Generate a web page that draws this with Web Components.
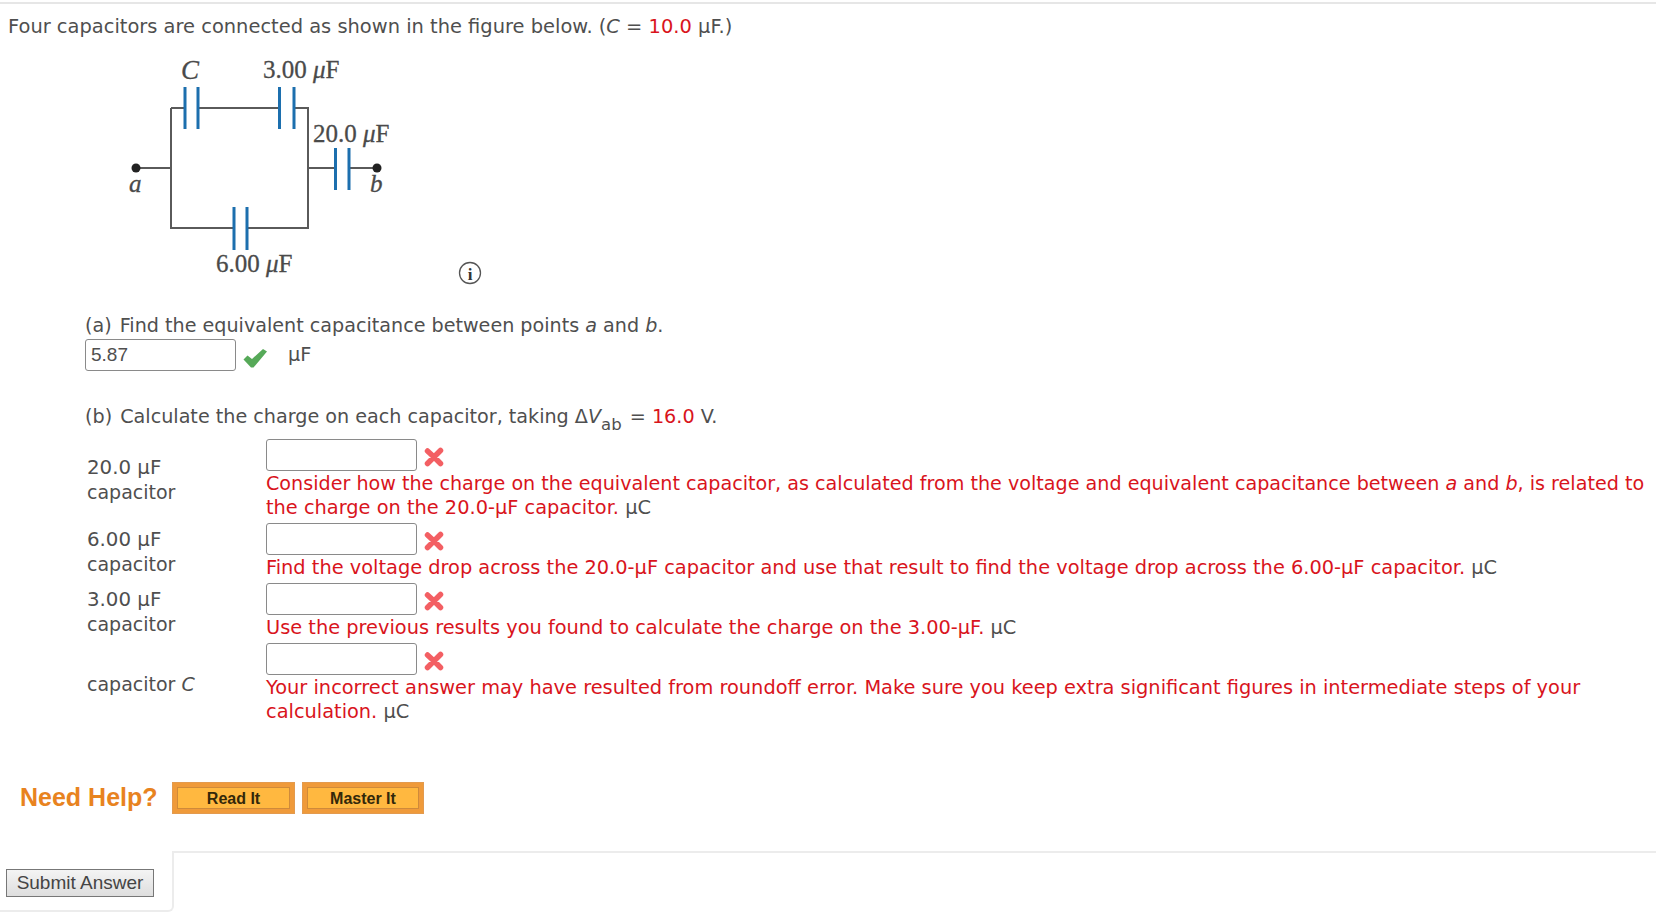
<!DOCTYPE html>
<html><head><meta charset="utf-8">
<style>
html,body{margin:0;padding:0;background:#fff}
body{font-family:"DejaVu Sans",sans-serif;font-size:19.3px;color:#4f4f4f;line-height:24px;width:1656px;height:924px;overflow:hidden}
</style></head><body>
<q-page>
  <q-intro>Four capacitors are connected as shown in the figure below. (<i>C</i> = <r-v>10.0</r-v> μF.)</q-intro>
  <q-circuit></q-circuit>
  <q-part-a></q-part-a>
  <q-part-b></q-part-b>
  <q-help></q-help>
  <q-footer></q-footer>
</q-page>
<script>
const def=(name,html)=>customElements.define(name,class extends HTMLElement{
  constructor(){super();this.attachShadow({mode:'open'}).innerHTML=html}
});
const check=`<svg width="24" height="20" viewBox="0 0 24 20" style="display:block"><path d="M0.500 11.500 L4.500 7.500 L9 11 L20 1 L24 3.500 L10.500 19.500 L8 19.500 Z" fill="#56a958"/></svg>`;
const cross=`<svg width="20" height="20" viewBox="0 0 20 20" style="display:block"><path d="M3.500 4 L10 10 M16.500 3.500 L10 10 M3.500 16.500 L10 10 M16.500 16.500 L10 10" stroke="#f35f63" stroke-width="5.500" stroke-linecap="round"/></svg>`;
def('r-v',`<style>:host{color:#d9141c}</style><slot></slot>`);
def('q-page',`<style>:host{display:block;margin-top:2px;border-top:2px solid #e6e6e6}</style><slot></slot>`);
def('q-intro',`<style>:host{display:block;padding:11px 0 0 8px;height:24px;font-size:19.45px}</style><slot></slot>`);
const cap=(x1,x2,y1,y2)=>`<path d="M${x1} ${y1}V${y2}M${x2} ${y1}V${y2}" stroke="#1c6fae" stroke-width="3" fill="none"/>`;
def('q-circuit',`<style>:host{display:block;height:274px;margin-top:-1px}svg{display:block}
text{font-family:"Liberation Serif",serif;font-size:25px;fill:#4a4a4a;stroke:#4a4a4a;stroke-width:.3px;font-weight:400}</style>
<svg width="520" height="252" viewBox="0 38 520 252">
<path d="M171 108H185M198 108H279M294 108H308V228H247M234 228H171V108M136 168H171M308 168H335M349 168H377" stroke="#5a5a5a" stroke-width="2" fill="none"/>
${cap(185,198,87,129)}${cap(279.500,294,87,129)}${cap(335.500,349,148,190)}${cap(234,247,207,250)}
<circle cx="136" cy="168" r="4.500" fill="#222"/><circle cx="377" cy="168" r="4.500" fill="#222"/>
<text x="181" y="79" style="font-style:italic;font-size:27px">C</text>
<text x="263" y="78">3.00 <tspan style="font-style:italic">μ</tspan>F</text>
<text x="313" y="142">20.0 <tspan style="font-style:italic">μ</tspan>F</text>
<text x="216" y="272">6.00 <tspan style="font-style:italic">μ</tspan>F</text>
<text x="129" y="192" style="font-style:italic">a</text>
<text x="370" y="192" style="font-style:italic">b</text>
<circle cx="470" cy="273" r="10.500" fill="none" stroke="#555" stroke-width="1.300"/>
<text x="470" y="279.500" text-anchor="middle" style="font-size:17px;font-weight:700;fill:#333;stroke:none">i</text>
</svg>`);
def('q-input',`<style>:host{display:block;box-sizing:border-box;width:151px;height:32px;border:1px solid #8a8a8a;border-radius:3px;background:#fff;
font:19px/29px "Liberation Sans",sans-serif;color:#4f4f4f;padding-left:5px}</style><slot></slot>`);
def('q-part-a',`<style>:host{display:block;padding:0 0 0 85px}
.l{height:26px;line-height:28px;font-size:19.15px}
.m{margin-right:2px}
.r{display:flex;align-items:center;height:32px;margin-top:1px}
.c{margin-left:7px;margin-top:6px}.u{margin-left:21px;margin-top:0}
i{font-style:italic}</style>
<div class="l"><span class="m">(a)</span> Find the equivalent capacitance between points <i>a</i> and <i>b</i>.</div>
<div class="r"><q-input>5.87</q-input><span class="c">${check}</span><span class="u">μF</span></div>`);
def('q-row',`<style>:host{display:contents}
.n{padding:2px 0 0 2px;align-self:center}
.a{display:flex;align-items:center;height:32px}
.x{margin-left:7px;margin-top:4px;height:20px}
.f{color:#d9141c;margin-top:1px;line-height:24px;white-space:nowrap}</style>
<div class="n"><slot name="label"></slot></div>
<div><div class="a"><q-input></q-input><span class="x">${cross}</span></div><div class="f"><slot></slot></div></div>`);
def('q-part-b',`<style>:host{display:block;padding:0 0 0 85px}
.h{height:26px;line-height:28px;margin-top:32px;white-space:nowrap;font-size:19.17px}
.m{margin-right:2px}
sub{font-size:16.5px;line-height:0;vertical-align:-7px;margin-right:2px}
.g{display:grid;grid-template-columns:181px 1400px;row-gap:3px;margin-top:10px}
i{font-style:italic}.u{color:#4f4f4f}.n{font-size:19.8px}.c{font-size:19px}
.l1{font-size:19.15px}.l2{font-size:19.38px}</style>
<div class="h"><span class="m">(b)</span> Calculate the charge on each capacitor, taking Δ<i>V</i><sub>ab</sub> = <r-v>16.0</r-v> V.</div>
<div class="g">
<q-row><span slot="label"><span class="n">20.0 μF</span><br><span class="c">capacitor</span></span><span><span class="l1">Consider how the charge on the equivalent capacitor, as calculated from the voltage and equivalent capacitance between <i>a</i> and <i>b</i>, is related to</span><br><span class="l2">the charge on the 20.0-μF capacitor. <span class="u">μC</span></span></span></q-row>
<q-row><span slot="label"><span class="n">6.00 μF</span><br><span class="c">capacitor</span></span><span class="l2">Find the voltage drop across the 20.0-μF capacitor and use that result to find the voltage drop across the 6.00-μF capacitor. <span class="u">μC</span></span></q-row>
<q-row><span slot="label"><span class="n">3.00 μF</span><br><span class="c">capacitor</span></span><span class="l2">Use the previous results you found to calculate the charge on the 3.00-μF. <span class="u">μC</span></span></q-row>
<q-row><span slot="label" class="c">capacitor <i>C</i></span><span class="l2">Your incorrect answer may have resulted from roundoff error. Make sure you keep extra significant figures in intermediate steps of your<br>calculation. <span class="u">μC</span></span></q-row>
</div>`);
def('q-help-btn',`<style>:host{display:flex;align-items:center;justify-content:center;box-sizing:border-box;height:32px;width:123px;padding-top:2px;
background:#ffb840;border:1px solid #e39a4e;box-shadow:inset 0 0 0 4px #ef9a3a,inset 0 0 0 5px #cf8a3a;
font:700 16px "Liberation Sans",sans-serif;color:#33280a}</style><slot></slot>`);
def('q-help',`<style>:host{display:flex;align-items:center;height:32px;padding-left:20px;margin-top:58px}
.t{font:700 25px "Liberation Sans",sans-serif;color:#e8831f;width:152px;margin-top:-2px}
q-help-btn+q-help-btn{margin-left:7px}</style>
<span class="t">Need Help?</span><q-help-btn>Read It</q-help-btn><q-help-btn style="width:122px">Master It</q-help-btn>`);
def('q-footer',`<style>:host{display:flex;height:61px;margin-top:37px}
.l{box-sizing:border-box;width:174px;height:61px;border-right:2px solid #ececec;border-bottom:2px solid #ececec;border-bottom-right-radius:6px;padding:18px 0 0 6px}
.b{box-sizing:border-box;width:148px;height:28px;background:linear-gradient(#f4f4f4,#dedede);border:1px solid #777;
font:19px/26px "Liberation Sans",sans-serif;color:#444;text-align:center}
.r{flex:1;border-top:2px solid #ececec}</style>
<div class="l"><div class="b">Submit Answer</div></div><div class="r"></div>`);
</script>
</body></html>
